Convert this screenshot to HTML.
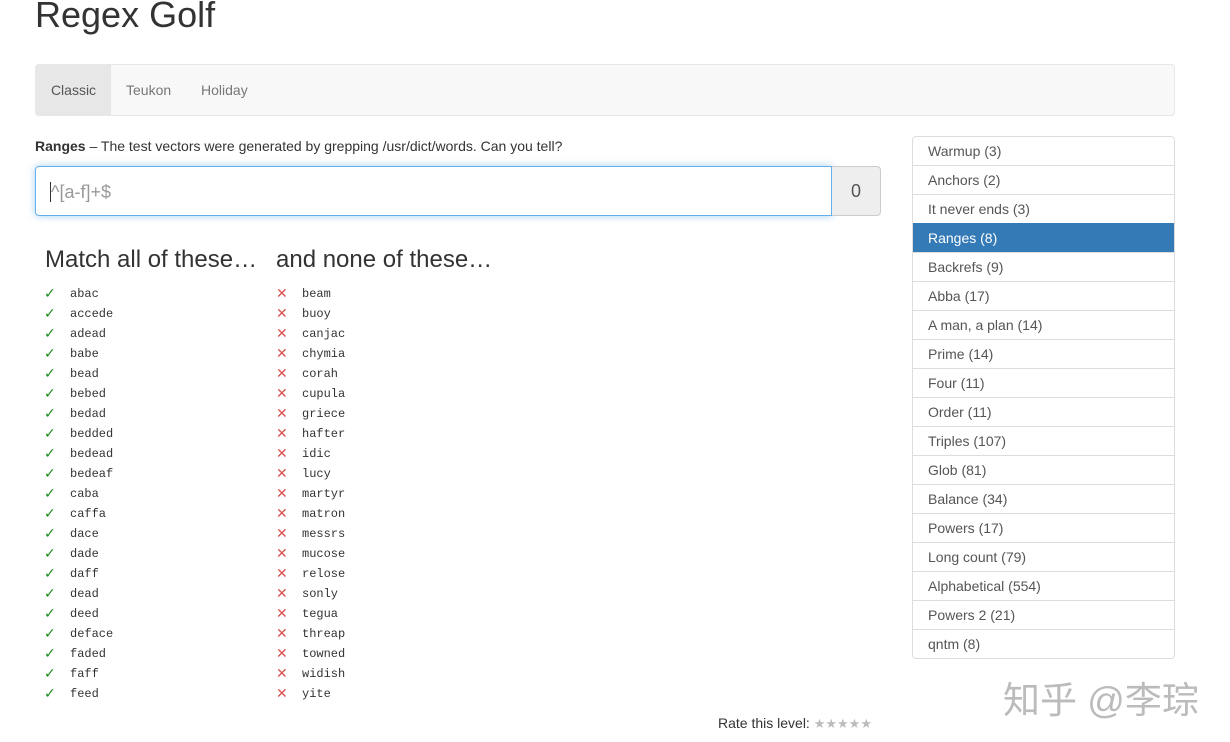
<!DOCTYPE html>
<html><head><meta charset="utf-8"><style>
body{margin:0;width:1230px;height:742px;overflow:hidden;background:#fff;font-family:"Liberation Sans",sans-serif;color:#333;position:relative}
.a{position:absolute}
h1{position:absolute;left:35px;top:-6px;margin:0;font-size:36px;font-weight:400;color:#333}
.nav{left:35px;top:64px;width:1138px;height:50px;background:#f8f8f8;border:1px solid #e7e7e7;border-radius:4px}
.nav span{position:absolute;top:0;height:50px;line-height:50px;font-size:14px;color:#777}
.desc{left:35px;top:138px;font-size:14px}
.inp{left:35px;top:166px;width:797px;height:50px;border:1px solid #66afe9;border-radius:4px 0 0 4px;box-shadow:0 0 8px rgba(102,175,233,.6);font-size:18px;color:#999;line-height:50px;padding-left:14px;box-sizing:border-box}
.add{left:832px;top:166px;width:48px;height:48px;background:#eee;border:1px solid #ccc;border-left:none;border-radius:0 4px 4px 0;font-size:18px;text-align:center;line-height:48px;color:#555}
h3{position:absolute;margin:0;font-size:24px;font-weight:400;top:246px}
.row{position:absolute;height:20px;line-height:20px;font-family:"Liberation Mono",monospace;font-size:12px}
.ok{color:#1a8a1a;font-weight:bold;font-family:"DejaVu Sans",sans-serif;font-size:14px}
.no{color:#d9534f;font-family:"DejaVu Sans",sans-serif;font-size:14px}
.side{left:912px;top:136px;width:261px;border:1px solid #ddd;border-radius:4px;overflow:hidden}
.side div{height:28px;line-height:28px;border-top:1px solid #ddd;padding-left:15px;font-size:14px;color:#555}
.side div:first-child{border-top:none}
.side .act{background:#337ab7;color:#fff;border-color:#337ab7}
</style></head><body>
<h1>Regex Golf</h1>
<div class="a nav"><span style="left:0;width:75px;background:#e7e7e7;color:#555;text-align:center">Classic</span><span style="left:90px">Teukon</span><span style="left:165px">Holiday</span></div>
<div class="a desc"><b>Ranges</b> – The test vectors were generated by grepping /usr/dict/words. Can you tell?</div>
<div class="a inp"><span style="border-left:1px solid #333">^[a-f]+$</span></div>
<div class="a add">0</div>
<h3 style="left:45px">Match all of these…</h3>
<h3 style="left:276px">and none of these…</h3>
<div id="L"></div>
<script>
var m="abac accede adead babe bead bebed bedad bedded bedead bedeaf caba caffa dace dade daff dead deed deface faded faff feed".split(" ");
var n="beam buoy canjac chymia corah cupula griece hafter idic lucy martyr matron messrs mucose relose sonly tegua threap towned widish yite".split(" ");
var h="";
for(var i=0;i<21;i++){var y=284+i*20;
h+='<div class="row" style="left:44px;top:'+y+'px"><span class="ok">✓</span></div><div class="row" style="left:70px;top:'+y+'px">'+m[i]+'</div>';
h+='<div class="row" style="left:276px;top:'+y+'px"><span class="no">✕</span></div><div class="row" style="left:302px;top:'+y+'px">'+n[i]+'</div>';}
document.getElementById("L").innerHTML=h;
</script>
<div class="a side">
<div>Warmup (3)</div><div>Anchors (2)</div><div>It never ends (3)</div><div class="act">Ranges (8)</div><div>Backrefs (9)</div><div>Abba (17)</div><div>A man, a plan (14)</div><div>Prime (14)</div><div>Four (11)</div><div>Order (11)</div><div>Triples (107)</div><div>Glob (81)</div><div>Balance (34)</div><div>Powers (17)</div><div>Long count (79)</div><div>Alphabetical (554)</div><div>Powers 2 (21)</div><div>qntm (8)</div>
</div>
<div class="a" style="left:1003px;top:670px;font-size:37px;color:#bbb;font-family:'Liberation Sans','Noto Sans CJK SC',sans-serif">知乎 @李琮</div>
<div class="a" style="left:718px;top:715px;font-size:14px">Rate this level: <span style="color:#bbb;font-size:13px">★★★★★</span></div>
</body></html>
